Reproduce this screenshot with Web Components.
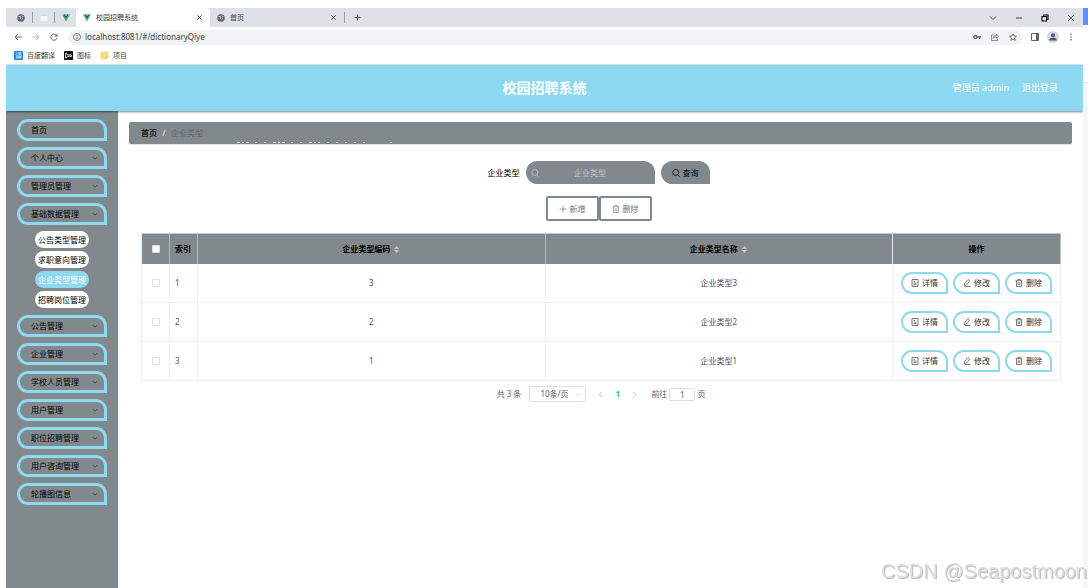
<!DOCTYPE html>
<html lang="zh-CN">
<head>
<meta charset="UTF-8">
<title>校园招聘系统</title>
<style>
  :root {
    --sky: #8cd9f1;
    --slate: #82898c;
    --line: #ebeef5;
  }
  body {
    margin: 0;
    background: #fff;
    color: #000;
    font: 8px/12px "Noto Sans", "Noto Sans CJK SC", sans-serif;
  }
</style>
</head>
<body>
<desktop-view></desktop-view>

<script>
const icons = {
  globe: '<circle cx="8" cy="8" r="7.5" fill="#5f6368"/><path d="M3 5l4 0 1 3-2 1M10 3l3 3M9 11l3-2" fill="none" stroke="#dee1e6" stroke-width="1.800"/>',
  sheet: '<rect x="1" y="2" width="14" height="12" fill="#f4f7f3"/><path d="M1 3h14" stroke="#cfe0d0" stroke-width="2"/>',
  vue: '<path d="M0 1h16L8 15z" fill="#41b883"/><path d="M3.500 1h9L8 9z" fill="#35495e"/><path d="M6 1h4L8 4.500z" fill="#fff"/>',
  close: '<path d="M3 3l10 10M13 3L3 13" fill="none" stroke="currentColor" stroke-width="2.200"/>',
  plus: '<path d="M8 1v14M1 8h14" fill="none" stroke="currentColor" stroke-width="2"/>',
  add: '<path d="M8 1v14M1 8h14" fill="none" stroke="currentColor" stroke-width="1.300"/>',
  down: '<path d="M2 5l6 6 6-6" fill="none" stroke="currentColor" stroke-width="1.800"/>',
  left: '<path d="M11 2L5 8l6 6" fill="none" stroke="currentColor" stroke-width="1.800"/>',
  right: '<path d="M5 2l6 6-6 6" fill="none" stroke="currentColor" stroke-width="1.800"/>',
  minus: '<path d="M2 8h12" stroke="currentColor" stroke-width="2"/>',
  restore: '<path d="M2 5h9v9H2zM5 5V2h9v9h-3" fill="none" stroke="#000" stroke-width="2.200"/>',
  exit: '<path d="M2 2l12 12M14 2L2 14" fill="none" stroke="currentColor" stroke-width="1.600"/>',
  back: '<path d="M15 8H2M8 2L2 8l6 6" fill="none" stroke="currentColor" stroke-width="2"/>',
  forward: '<path d="M1 8h13M8 2l6 6-6 6" fill="none" stroke="currentColor" stroke-width="2"/>',
  reload: '<path d="M13 4.500A6.200 6.200 0 1 0 14 10" fill="none" stroke="currentColor" stroke-width="2"/><path d="M15 1v6H9z" fill="currentColor"/>',
  info: '<circle cx="8" cy="8" r="7" fill="none" stroke="currentColor" stroke-width="1.600"/><path d="M8 7v5M8 4v1.800" stroke="currentColor" stroke-width="1.800"/>',
  key: '<circle cx="4.500" cy="8" r="3" fill="none" stroke="currentColor" stroke-width="2.600"/><path d="M8 8h8M13.500 8v4" fill="none" stroke="currentColor" stroke-width="2.600"/>',
  share: '<path d="M5 4H1v11h12v-4M4 11c0-4 3-6 7-6V2l4 4.500-4 4V8c-3 0-5 1-7 3z" fill="none" stroke="currentColor" stroke-width="1.400"/>',
  star: '<path d="M8 1.500l2 4.500 5 .5-3.800 3.300 1.200 4.900L8 12.100l-4.400 2.600 1.200-4.900L1 6.500 6 6z" fill="none" stroke="currentColor" stroke-width="1.700"/>',
  panel: '<path d="M1 1h14v14H1z" fill="none" stroke="currentColor" stroke-width="2"/><path d="M10 1h5v14h-5z" fill="currentColor"/>',
  avatar: '<circle cx="8" cy="8" r="8" fill="#d3d9e3"/><circle cx="8" cy="5.500" r="2.500" fill="#4a5872"/><path d="M3 12.500c0-5 10-5 10 0z" fill="#4a5872"/>',
  dots: '<g fill="currentColor"><circle cx="8" cy="2.500" r="1.600"/><circle cx="8" cy="8" r="1.600"/><circle cx="8" cy="13.500" r="1.600"/></g>',
  board: '<rect width="16" height="16" rx="1" fill="#111"/><path d="M3 13V4h2l1 3h7v3l-4-1-6 3" fill="none" stroke="#fff" stroke-width="1.500"/>',
  note: '<path d="M1 1h14v9l-5 5H1z" fill="#fbdc7c"/><path d="M15 10l-5 5v-5z" fill="#e8bd4c"/>',
  search: '<circle cx="7.500" cy="7" r="6" fill="none" stroke="currentColor" stroke-width="1.500"/><path d="M11.500 11.500L15 15" stroke="currentColor" stroke-width="1.500"/>',
  trash: '<path d="M1 3.500h14M5.500 3V1h5v2M3 4v11h10V4M6.500 6.500v6M9.500 6.500v6" fill="none" stroke="currentColor" stroke-width="1.300"/>',
  doc: '<path d="M2 1h12v14H2zM5 5h3M5 8h6M5 11h6" fill="none" stroke="currentColor" stroke-width="1.300"/>',
  edit: '<path d="M3 9l7-8 3.500 3L7 12l-4.500 1zM3 15h12" fill="none" stroke="currentColor" stroke-width="1.300"/>',
  sort: '<path d="M8 0l6 7H2zM8 16l6-7H2z" fill="#c0c4cc"/>'
};

function define(name, html) {
  const template = document.createElement('template');
  template.innerHTML = html;
  customElements.define(name, class extends HTMLElement {
    constructor() {
      super();
      this.attachShadow({ mode: 'open' }).appendChild(template.content.cloneNode(true));
    }
  });
}

// <ui-icon name="..."> : size comes from --size
class UiIcon extends HTMLElement {
  connectedCallback() {
    if (this.shadowRoot) return;
    this.attachShadow({ mode: 'open' }).innerHTML = `
      <style>
        :host { display: inline-flex; flex: none; width: var(--size, 8px); height: var(--size, 8px); }
        svg { display: block; width: 100%; height: 100%; }
      </style>
      <svg viewBox="0 0 16 16" aria-hidden="true">${icons[this.getAttribute('name')]}</svg>`;
  }
}
customElements.define('ui-icon', UiIcon);

define('tab-strip', `
  <style>
    :host { display: flex; align-items: stretch; height: 19px; background: #dee1e6; color: #3c4043; font-size: 7px; }
    button { border: 0; padding: 0; background: none; color: inherit; font: inherit; display: flex; align-items: center; }
    .pin { width: 22px; justify-content: center; }
    .pin + .pin { border-left: 1px solid #9b9fa4; margin: 4px 0; padding: 0; }
    .pins { display: flex; padding-left: 4px; }
    .pins .pin:first-child { margin: 4px 0; }
    .tab { display: flex; align-items: center; gap: 5px; width: 120px; padding: 0 7px; }
    .tab.active { background: #fff; border-radius: 4px 4px 0 0; }
    .tab button:first-child { flex: 1; gap: 5px; text-align: left; }
    .tab ui-icon[name=close] { --size: 7px; }
    .new { margin: 4px 0; padding: 0 9px; border-left: 1px solid #9b9fa4; --size: 7px; }
    .window { margin-left: auto; display: flex; gap: 18px; padding-right: 8px; --size: 8px; }
  </style>
  <div class="pins">
    <button class="pin" aria-label="网页"><ui-icon name="globe"></ui-icon></button>
    <button class="pin" aria-label="表格"><ui-icon name="sheet"></ui-icon></button>
    <button class="pin" aria-label="Vue"><ui-icon name="vue"></ui-icon></button>
  </div>
  <div class="tab active">
    <button><ui-icon name="vue"></ui-icon>校园招聘系统</button>
    <button aria-label="关闭"><ui-icon name="close"></ui-icon></button>
  </div>
  <div class="tab">
    <button><ui-icon name="globe"></ui-icon>首页</button>
    <button aria-label="关闭"><ui-icon name="close"></ui-icon></button>
  </div>
  <button class="new" aria-label="新标签页"><ui-icon name="plus"></ui-icon></button>
  <div class="window">
    <button aria-label="标签搜索"><ui-icon name="down"></ui-icon></button>
    <button aria-label="最小化"><ui-icon name="minus"></ui-icon></button>
    <button aria-label="还原"><ui-icon name="restore"></ui-icon></button>
    <button aria-label="关闭窗口"><ui-icon name="exit"></ui-icon></button>
  </div>
`);

define('address-bar', `
  <style>
    :host { display: flex; align-items: center; gap: 10px; height: 20px; padding: 0 8px; background: #fff; color: #5f6368; }
    button { border: 0; padding: 0; background: none; color: inherit; display: flex; }
    .forward { color: #b5b8bc; }
    .url { flex: 1; display: flex; align-items: center; gap: 4px; height: 15px; padding: 0 6px 0 5px; margin-right: -2px; border-radius: 8px; background: #f1f3f4; }
    input { flex: 1; min-width: 0; border: 0; padding: 0; background: none; color: #3c4043; font: 8px/14px "Noto Sans", sans-serif; outline: 0; }
    .url button { margin-left: 6px; }
    .avatar { --size: 12px; margin: 0 -2px; }
  </style>
  <button aria-label="后退"><ui-icon name="back"></ui-icon></button>
  <button class="forward" aria-label="前进"><ui-icon name="forward"></ui-icon></button>
  <button aria-label="刷新"><ui-icon name="reload"></ui-icon></button>
  <div class="url">
    <ui-icon name="info"></ui-icon>
    <input aria-label="地址" value="localhost:8081/#/dictionaryQiye">
    <button aria-label="密码"><ui-icon name="key"></ui-icon></button>
    <button aria-label="分享"><ui-icon name="share"></ui-icon></button>
    <button aria-label="收藏"><ui-icon name="star"></ui-icon></button>
  </div>
  <button aria-label="侧边栏"><ui-icon name="panel"></ui-icon></button>
  <button class="avatar" aria-label="用户"><ui-icon name="avatar"></ui-icon></button>
  <button aria-label="菜单"><ui-icon name="dots"></ui-icon></button>
`);

define('bookmark-bar', `
  <style>
    :host { display: flex; align-items: center; gap: 9px; height: 18px; padding: 0 8px; border-bottom: 1px solid #dadce0; background: #fff; font-size: 7px; --size: 9px; box-sizing: border-box; }
    a { display: flex; align-items: center; gap: 4px; color: #3c4043; text-decoration: none; }
    .mark { width: 9px; height: 9px; border-radius: 1px; background: #1787f7; color: #fff; line-height: 9px; text-align: center; }
  </style>
  <a href="#fanyi"><span class="mark">译</span>百度翻译</a>
  <a href="#icons"><ui-icon name="board"></ui-icon>图标</a>
  <a href="#project"><ui-icon name="note"></ui-icon>项目</a>
`);

define('app-header', `
  <style>
    :host {
      display: grid; grid-template-columns: 1fr auto 1fr; align-items: center;
      height: 46px; padding: 0 25px; background: var(--sky); color: #fff;
      box-shadow: 0 1px 2px rgba(0, 0, 0, .5); clip-path: inset(0 0 -4px 0); position: relative; z-index: 1;
    }
    h1 { grid-column: 2; margin: 0; font-size: 14px; line-height: 20px; font-weight: 700; }
    div { display: flex; justify-content: flex-end; gap: 13px; font-size: 9px; }
    a { color: inherit; text-decoration: none; }
  </style>
  <h1>校园招聘系统</h1>
  <div><span>管理员 admin</span><a href="#logout">退出登录</a></div>
`);

define('nav-item', `
  <style>
    :host { display: block; }
    button {
      box-sizing: border-box; width: 100%; height: 22px; padding: 0 6px 0 11px;
      display: flex; align-items: center; justify-content: space-between;
      border: 3px solid var(--sky); border-radius: 11px 11px 0 11px;
      background: none; color: #000; font: inherit; --size: 6px;
    }
    ui-icon { color: #33383a; }
    :host([plain]) ui-icon { display: none; }
  </style>
  <button><slot></slot><ui-icon name="down"></ui-icon></button>
`);

define('sub-item', `
  <style>
    :host { display: flex; }
    a {
      height: 17px; padding: 0 3px; border-radius: 9px; background: #fff;
      color: #000; line-height: 17px; text-decoration: none; white-space: nowrap;
    }
    :host([active]) a { background: var(--sky); color: #fff; }
  </style>
  <a href="#menu"><slot></slot></a>
`);

define('side-menu', `
  <style>
    :host { display: block; background: var(--slate); }
    nav { display: flex; flex-direction: column; gap: 6px; padding: 8px 11px; }
    .sub { display: flex; flex-direction: column; align-items: center; gap: 3px; padding-bottom: 1px; }
  </style>
  <nav>
    <nav-item plain>首页</nav-item>
    <nav-item>个人中心</nav-item>
    <nav-item>管理员管理</nav-item>
    <nav-item>基础数据管理</nav-item>
    <div class="sub">
      <sub-item>公告类型管理</sub-item>
      <sub-item>求职意向管理</sub-item>
      <sub-item active>企业类型管理</sub-item>
      <sub-item>招聘岗位管理</sub-item>
    </div>
    <nav-item>公告管理</nav-item>
    <nav-item>企业管理</nav-item>
    <nav-item>学校人员管理</nav-item>
    <nav-item>用户管理</nav-item>
    <nav-item>职位招聘管理</nav-item>
    <nav-item>用户咨询管理</nav-item>
    <nav-item>轮播图信息</nav-item>
  </nav>
`);

define('bread-crumb', `
  <style>
    :host { display: flex; align-items: center; height: 22px; padding-left: 12px; border-radius: 2px; background: var(--slate); box-shadow: 0 1px 0 #e0e2e3; }
    a { color: #1c1f20; font-weight: 700; text-decoration: none; }
    i { width: 14px; color: #d4d8da; font-style: normal; font-weight: 700; text-align: center; }
    .here { color: #5d6366; }
    svg { display: block; align-self: flex-end; margin-left: 34px; }
  </style>
  <a href="#home">首页</a><i>/</i><span class="here">企业类型</span>
  <svg width="156" height="2" aria-hidden="true"><path stroke="#e8eaeb" d="M0 .5h3M5 .5h2M9 .5h3M18 .5h2M27 .5h2M36 .5h3M41 .5h2M45 .5h3M54 .5h2M63 .5h2M72 .5h3M77 .5h2M81 .5h2M90 .5h2M99 .5h2M108 .5h2M117 .5h2M126 .5h2M153 .5h2"/></svg>
`);

define('search-form', `
  <style>
    :host { display: block; }
    form { display: flex; align-items: center; justify-content: center; gap: 6px; padding-right: 5px; }
    .field { display: flex; align-items: center; width: 129px; height: 23px; border-radius: 12px 12px 0 12px; background: var(--slate); color: #c0c4cc; }
    .field ui-icon { margin-left: 5px; }
    input { flex: 1; min-width: 0; border: 0; padding: 0 13px 0 0; background: none; color: #fff; font: inherit; text-align: center; outline: 0; }
    input::placeholder { color: #bfc3c8; opacity: 1; }
    button {
      display: flex; align-items: center; justify-content: center; gap: 3px; width: 49px; height: 23px;
      border: 0; padding: 0; border-radius: 12px 12px 0 12px; background: var(--slate); color: #000; font: inherit;
    }
  </style>
  <form>
    <label for="type">企业类型</label>
    <div class="field"><ui-icon name="search"></ui-icon><input id="type" placeholder="企业类型"></div>
    <button type="button"><ui-icon name="search"></ui-icon>查询</button>
  </form>
`);

define('tool-bar', `
  <style>
    :host { display: flex; justify-content: center; padding-right: 5px; }
    button {
      box-sizing: border-box; width: 53px; height: 25px; padding: 0;
      display: flex; align-items: center; justify-content: center; gap: 3px;
      border: 2px solid var(--slate); border-radius: 2px; background: #fff; color: #6f7578; font: inherit;
    }
  </style>
  <button><ui-icon name="add"></ui-icon>新增</button>
  <button><ui-icon name="trash"></ui-icon>删除</button>
`);

define('op-button', `
  <style>
    :host { display: inline-flex; }
    button {
      box-sizing: border-box; width: 47px; height: 22px; padding: 0;
      display: flex; align-items: center; justify-content: center; gap: 3px;
      border: 2px solid var(--sky); border-radius: 11px 11px 0 11px; background: #fff; color: #303133; font: inherit;
    }
  </style>
  <button><slot name="icon"></slot><slot></slot></button>
`);

class TypeTable extends HTMLElement {
  constructor() {
    super();
    this.attachShadow({ mode: 'open' });
    this.rows = [
      { index: 1, code: 3, name: '企业类型3' },
      { index: 2, code: 2, name: '企业类型2' },
      { index: 3, code: 1, name: '企业类型1' }
    ];
    this.render();
  }

  render() {
    const body = this.rows.map(row => `
      <tr>
        <td><input type="checkbox" aria-label="选择 ${row.index}"></td>
        <td class="index">${row.index}</td>
        <td>${row.code}</td>
        <td>${row.name}</td>
        <td><div class="ops">
          <op-button><ui-icon slot="icon" name="doc"></ui-icon>详情</op-button>
          <op-button><ui-icon slot="icon" name="edit"></ui-icon>修改</op-button>
          <op-button><ui-icon slot="icon" name="trash"></ui-icon>删除</op-button>
        </div></td>
      </tr>`).join('');

    this.shadowRoot.innerHTML = `
      <style>
        :host { display: block; }
        table { width: 100%; table-layout: fixed; border-collapse: separate; border-spacing: 0; border-left: 1px solid var(--line); border-top: 1px solid #c3c8cc; }
        th, td { box-sizing: border-box; padding: 0; border-right: 1px solid var(--line); text-align: center; }
        th { height: 30px; background: var(--slate); border-right-color: #b4babe; color: #000; font-weight: 700; }
        th:nth-child(4) { border-right-color: #e4e7ed; }
        td { height: 39px; border-bottom: 1px solid var(--line); color: #4c4f55; }
        .small { width: 28px; }
        .wide { width: 168px; }
        .index { padding-left: 5px; text-align: left; }
        .title { display: flex; align-items: center; justify-content: center; gap: 3px; --size: 7px; }
        .ops { display: flex; justify-content: center; gap: 5px; }
        input { appearance: none; display: block; box-sizing: border-box; width: 8px; height: 8px; margin: 0 auto; border: 1px solid #dcdfe6; border-radius: 1px; background: #fff; }
      </style>
      <table>
        <colgroup><col class="small"><col class="small"><col><col><col class="wide"></colgroup>
        <thead>
          <tr>
            <th><input type="checkbox" aria-label="全选"></th>
            <th class="index">索引</th>
            <th><div class="title">企业类型编码<ui-icon name="sort"></ui-icon></div></th>
            <th><div class="title">企业类型名称<ui-icon name="sort"></ui-icon></div></th>
            <th>操作</th>
          </tr>
        </thead>
        <tbody>${body}</tbody>
      </table>`;
  }
}
customElements.define('type-table', TypeTable);

define('page-nav', `
  <style>
    :host { display: flex; align-items: center; justify-content: center; gap: 8px; color: #606266; --size: 7px; }
    .size { display: grid; align-items: center; width: 57px; height: 16px; }
    .size > * { grid-area: 1 / 1; }
    .size ui-icon { justify-self: end; margin-right: 4px; color: #c0c4cc; pointer-events: none; }
    select, input { box-sizing: border-box; border: 1px solid #dcdfe6; border-radius: 2px; background: #fff; color: #606266; font: inherit; outline: 0; }
    select { appearance: none; width: 100%; height: 100%; padding: 0 10px; }
    .pages { display: flex; align-items: center; gap: 4px; padding-right: 2px; }
    .pages button { display: flex; align-items: center; justify-content: center; width: 13px; border: 0; padding: 0; background: none; color: #a8abb2; font: inherit; }
    .pages .current { color: #18c79c; font-weight: 700; }
    .jump { display: flex; align-items: center; gap: 2px; }
    input { width: 26px; height: 13px; padding: 0; text-align: center; }
  </style>
  <span>共 3 条</span>
  <div class="size">
    <select aria-label="每页条数"><option>10条/页</option></select>
    <ui-icon name="down"></ui-icon>
  </div>
  <div class="pages">
    <button aria-label="上一页"><ui-icon name="left"></ui-icon></button>
    <button class="current">1</button>
    <button aria-label="下一页"><ui-icon name="right"></ui-icon></button>
  </div>
  <div class="jump"><label for="page">前往</label><input id="page" value="1"><span>页</span></div>
`);

define('type-page', `
  <style>
    :host { display: block; padding: 11px; background: #fff; }
    .list { display: flex; flex-direction: column; gap: 12px; padding: 17px 11px 0 12px; }
    page-nav { margin-top: 5px; }
  </style>
  <bread-crumb></bread-crumb>
  <div class="list">
    <search-form></search-form>
    <tool-bar></tool-bar>
    <div><type-table></type-table><page-nav></page-nav></div>
  </div>
`);

define('desktop-view', `
  <style>
    :host { display: grid; grid-template-columns: minmax(0, 1fr) 5px; box-sizing: border-box; min-height: 100vh; padding: 8px 0 0 6px; }
    .window { display: flex; flex-direction: column; }
    .app { flex: 1; display: grid; grid-template-columns: 112px minmax(0, 1fr); }
    .behind { display: flex; flex-direction: column; }
    .behind::before { content: ""; height: 17px; background: #5b8ff9; }
    .behind::after { content: ""; flex: 1; margin-top: 57px; border-top: 1px solid #e6e7e9; background: #f6f7f9; }
    .mark { position: fixed; right: 1px; bottom: 4px; z-index: 2; color: #dcdcdc; font: 20px/26px "Liberation Sans", sans-serif; text-shadow: 1px 1px 0 #bdbdbd; }
  </style>
  <div class="window">
    <tab-strip></tab-strip>
    <address-bar></address-bar>
    <bookmark-bar></bookmark-bar>
    <app-header></app-header>
    <div class="app">
      <side-menu></side-menu>
      <type-page></type-page>
    </div>
  </div>
  <div class="behind"></div>
  <div class="mark">CSDN @Seapostmoon</div>
`);
</script>
</body>
</html>
